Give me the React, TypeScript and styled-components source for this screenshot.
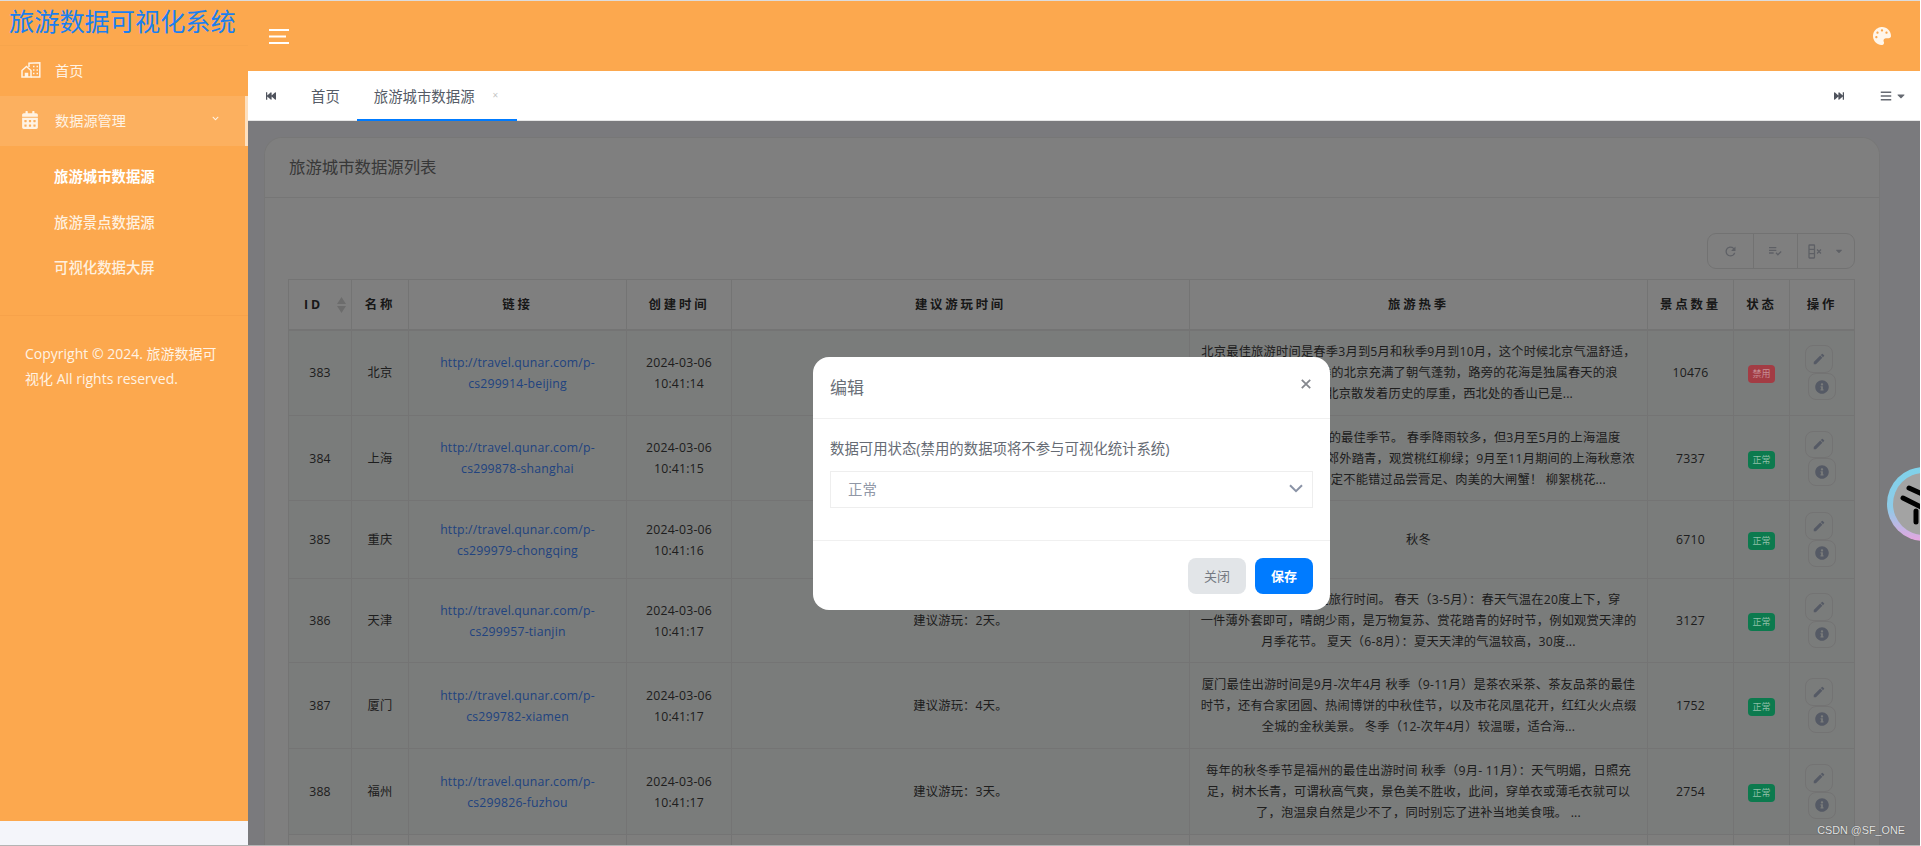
import React from 'react';
import styled, { createGlobalStyle } from 'styled-components';
import {
  FaBars,
  FaCalendarAlt,
  FaCaretDown,
  FaChevronDown,
  FaFastBackward,
  FaFastForward,
  FaInfoCircle,
  FaPalette,
} from 'react-icons/fa';
import { MdEdit, MdPlaylistAddCheck, MdRefresh } from 'react-icons/md';

interface ICityRow {
  id: number;
  name: string;
  linkHead: string;
  linkTail: string;
  date: string;
  time: string;
  days: string;
  season: string[];
  spots: number;
  enabled: boolean;
  height: number;
}

const COLUMNS = [63, 57, 218, 105, 458, 458, 86, 56, 65];

const ROWS: ICityRow[] = [
  {
    id: 383,
    name: '北京',
    linkHead: 'http://travel.qunar.com/p-',
    linkTail: 'cs299914-beijing',
    date: '2024-03-06',
    time: '10:41:14',
    days: '建议游玩：3天。',
    season: [
      '北京最佳旅游时间是春季3月到5月和秋季9月到10月，这个时候北京气温舒适，',
      '景色也很宜人。春季的北京充满了朝气蓬勃，路旁的花海是独属春天的浪',
      '漫；秋季的北京散发着历史的厚重，西北处的香山已是...',
    ],
    spots: 10476,
    enabled: false,
    height: 86,
  },
  {
    id: 384,
    name: '上海',
    linkHead: 'http://travel.qunar.com/p-',
    linkTail: 'cs299878-shanghai',
    date: '2024-03-06',
    time: '10:41:15',
    days: '建议游玩：3天。',
    season: [
      '上海春秋两季是旅游的最佳季节。 春季降雨较多，但3月至5月的上海温度',
      '适宜，适合踏春赏花、郊外踏青，观赏桃红柳绿；9月至11月期间的上海秋意浓',
      '郁，这时来上海一定不能错过品尝膏足、肉美的大闸蟹！ 柳絮桃花...',
    ],
    spots: 7337,
    enabled: true,
    height: 85,
  },
  {
    id: 385,
    name: '重庆',
    linkHead: 'http://travel.qunar.com/p-',
    linkTail: 'cs299979-chongqing',
    date: '2024-03-06',
    time: '10:41:16',
    days: '建议游玩：3天。',
    season: ['秋冬'],
    spots: 6710,
    enabled: true,
    height: 78,
  },
  {
    id: 386,
    name: '天津',
    linkHead: 'http://travel.qunar.com/p-',
    linkTail: 'cs299957-tianjin',
    date: '2024-03-06',
    time: '10:41:17',
    days: '建议游玩：2天。',
    season: [
      '天津春秋两季是最佳旅行时间。 春天（3-5月）：春天气温在20度上下，穿',
      '一件薄外套即可，晴朗少雨，是万物复苏、赏花踏青的好时节，例如观赏天津的',
      '月季花节。 夏天（6-8月）：夏天天津的气温较高，30度...',
    ],
    spots: 3127,
    enabled: true,
    height: 84,
  },
  {
    id: 387,
    name: '厦门',
    linkHead: 'http://travel.qunar.com/p-',
    linkTail: 'cs299782-xiamen',
    date: '2024-03-06',
    time: '10:41:17',
    days: '建议游玩：4天。',
    season: [
      '厦门最佳出游时间是9月-次年4月 秋季（9-11月）是茶农采茶、茶友品茶的最佳',
      '时节，还有合家团圆、热闹博饼的中秋佳节，以及市花凤凰花开，红红火火点缀',
      '全城的金秋美景。 冬季（12-次年4月）较温暖，适合海...',
    ],
    spots: 1752,
    enabled: true,
    height: 86,
  },
  {
    id: 388,
    name: '福州',
    linkHead: 'http://travel.qunar.com/p-',
    linkTail: 'cs299826-fuzhou',
    date: '2024-03-06',
    time: '10:41:17',
    days: '建议游玩：3天。',
    season: [
      '每年的秋冬季节是福州的最佳出游时间 秋季（9月- 11月）：天气明媚，日照充',
      '足，树木长青，可谓秋高气爽，景色美不胜收，此间，穿单衣或薄毛衣就可以',
      '了，泡温泉自然是少不了，同时别忘了进补当地美食哦。 ...',
    ],
    spots: 2754,
    enabled: true,
    height: 86,
  },
];

const GlobalStyle = createGlobalStyle`
  html, body {
    margin: 0;
    padding: 0;
    height: 100%;
    overflow: hidden;
    background: #fff;
  }

  * {
    box-sizing: border-box;
  }

  body {
    font-family: "Open Sans", "Noto Sans CJK SC", sans-serif;
  }
`;

const Page = styled.div`
  position: relative;
  width: 1920px;
  height: 846px;
  display: flex;
  flex-direction: column;
  overflow: hidden;
`;

const EdgeLine = styled.div<{ $color: string }>`
  flex: 0 0 1px;
  background: ${(p) => p.$color};
`;

const Shell = styled.div`
  flex: 1;
  display: flex;
  min-height: 0;
`;

const SideColumn = styled.div`
  flex: 0 0 248px;
  display: flex;
  flex-direction: column;
  background: #f4f5fa;
  padding-bottom: 24px;
`;

const Sidebar = styled.aside`
  flex: 1;
  display: flex;
  flex-direction: column;
  background: #fca84e;
  color: #fff;
`;

const Logo = styled.div`
  height: 45px;
  padding: 4px 0 0 9px;
  font-size: 25.2px;
  line-height: 33px;
  color: #1a7ff0;
  white-space: nowrap;
  border-bottom: 1px solid #f7a54c;
`;

const MenuItem = styled.div<{ $active?: boolean }>`
  position: relative;
  height: 50px;
  display: flex;
  align-items: center;
  padding: 0 0 2px 21px;
  font-size: 14.2px;
  color: #fff3e4;
  background: ${(p) => (p.$active ? '#fcb05f' : 'transparent')};
  border-right: ${(p) => (p.$active ? '3px solid #fde0c0' : '0')};
`;

const MenuIcon = styled.span`
  width: 34px;
  display: flex;
  align-items: center;
`;

const MenuArrow = styled.span`
  position: absolute;
  left: 212px;
  top: 19px;
  font-size: 7px;
  color: #fff3e4;
`;

const SubMenu = styled.div`
  display: flex;
  flex-direction: column;
  padding: 7px 0 25px;
  border-bottom: 1px solid #f7a24a;
`;

const SubItem = styled.div<{ $active?: boolean }>`
  height: 45.5px;
  padding-left: 54px;
  display: flex;
  align-items: center;
  font-size: 14.4px;
  font-weight: ${(p) => (p.$active ? 700 : 500)};
  color: ${(p) => (p.$active ? '#fff' : '#fff0df')};
`;

const Copyright = styled.div`
  padding: 25px 24px 0 25px;
  font-size: 14px;
  line-height: 25px;
  color: #fff3e4;
`;

const Main = styled.div`
  flex: 1;
  min-width: 0;
  display: flex;
  flex-direction: column;
`;

const TopBar = styled.header`
  flex: 0 0 70px;
  display: flex;
  align-items: center;
  justify-content: space-between;
  padding: 0 29px 0 21px;
  background: #fca84e;
  color: #fff;
`;

const TabBar = styled.nav`
  flex: 0 0 50px;
  display: flex;
  align-items: stretch;
  background: #fff;
  border-bottom: 1px solid #e6e6e6;
  font-size: 14.4px;
  color: #555b66;
`;

const TabArrow = styled.div`
  width: 46px;
  display: flex;
  align-items: center;
  justify-content: center;
  font-size: 10px;
  color: #50545e;
`;

const Tab = styled.div<{ $active?: boolean }>`
  display: flex;
  align-items: center;
  padding: 0 17px;
  margin-bottom: -1px;
  border-bottom: 2px solid ${(p) => (p.$active ? '#007bff' : 'transparent')};
`;

const TabClose = styled.span`
  margin-left: 18px;
  padding-right: 2px;
  font-size: 10px;
  color: #c4c4c4;
`;

const TabSpacer = styled.div`
  flex: 1;
`;

const TabMenu = styled.div`
  width: 58px;
  display: flex;
  align-items: center;
  gap: 3px;
  padding-left: 18px;
  font-size: 12px;
  color: #666a72;
`;

const Content = styled.main`
  position: relative;
  flex: 1;
  min-height: 0;
  overflow: hidden;
  background: #f4f5fa;
  padding: 16px 40px 0 16px;
`;

const Card = styled.section`
  background: #fff;
  border: 1px solid #efefef;
  border-bottom: 0;
  border-radius: 18px 18px 0 0;
`;

const CardTitle = styled.h2`
  margin: 0;
  height: 60px;
  padding: 0 0 4px 24px;
  display: flex;
  align-items: center;
  font-size: 16.4px;
  font-weight: 400;
  color: #707070;
  border-bottom: 1px solid #ececec;
`;

const CardBody = styled.div`
  padding: 35px 24px 0 23px;
`;

const Toolbar = styled.div`
  display: flex;
  justify-content: flex-end;
  margin-bottom: 10px;
`;

const ToolGroup = styled.div`
  display: flex;
  height: 36px;
  border: 1px solid #e4e4e4;
  border-radius: 9px;
`;

const ToolButton = styled.div<{ $wide?: boolean }>`
  width: ${(p) => (p.$wide ? 57 : 44.5)}px;
  display: flex;
  align-items: center;
  justify-content: center;
  gap: 12px;
  color: #bcc0cb;
  & + & {
    border-left: 1px solid #e4e4e4;
  }
`;

const Table = styled.table`
  width: 1567px;
  table-layout: fixed;
  border-collapse: collapse;
  font-size: 12.25px;
  letter-spacing: 0.2px;
  line-height: 21px;
  color: #3c3c3c;
`;

const Col = styled.col<{ $width: number }>`
  width: ${(p) => p.$width}px;
`;

const HeadCell = styled.th<{ $left?: boolean }>`
  position: relative;
  height: 50px;
  padding: 0;
  font-size: 12.4px;
  font-weight: 700;
  letter-spacing: 2.8px;
  color: #303030;
  text-align: ${(p) => (p.$left ? 'left' : 'center')};
  padding-left: ${(p) => (p.$left ? 15 : 0)}px;
  border: 1px solid #e8e8e8;
  border-bottom: 2px solid #e8e8e8;
`;

const SortArrows = styled.svg`
  position: absolute;
  right: 5px;
  top: 17px;
`;

const Row = styled.tr<{ $height: number; $last?: boolean }>`
  height: ${(p) => p.$height}px;
  background: ${(p) => (p.$last ? '#fcfcfb' : '#f5f8f6')};
`;

const Cell = styled.td<{ $tight?: boolean }>`
  padding: 0 ${(p) => (p.$tight ? 0 : 12)}px;
  text-align: center;
  vertical-align: middle;
  border: 1px solid #e8e8e8;
`;

const OpsCell = styled(Cell)`
  padding: 0 12px;
  font-size: 0;
  line-height: 0;
`;

const TextLine = styled.div`
  white-space: nowrap;
`;

const CityLink = styled.a`
  color: #4287ff;
  text-decoration: none;
`;

const Badge = styled.span<{ $ok: boolean }>`
  position: relative;
  z-index: 2;
  display: inline-block;
  width: 27px;
  height: 18px;
  border-radius: 4px;
  font-size: 9px;
  line-height: 18px;
  letter-spacing: 0;
  text-align: center;
  background: ${(p) => (p.$ok ? '#0c7a4e' : '#a33c44')};
  color: ${(p) => (p.$ok ? '#8fbfa8' : '#c78f94')};
`;

const IconButton = styled.span<{ $gap?: boolean }>`
  display: inline-flex;
  align-items: center;
  justify-content: center;
  width: 27.5px;
  height: 27.5px;
  margin-right: ${(p) => (p.$gap ? 6 : 0)}px;
  border: 1px solid #e6e6e6;
  border-radius: 8px;
  font-size: 14px;
  color: #abb4ca;
`;

const Backdrop = styled.div`
  position: absolute;
  inset: 0;
  z-index: 1;
  background: rgba(0, 0, 0, 0.5);
`;

const FloatBall = styled.div`
  position: absolute;
  z-index: 3;
  top: 346px;
  left: 1639px;
  width: 74px;
  height: 74px;
  padding: 6px;
  border-radius: 50%;
  background: linear-gradient(180deg, #7fd2ea 0%, #8ecbe8 55%, #e6a6e0 100%);
`;

const FloatFace = styled.div`
  width: 100%;
  height: 100%;
  border-radius: 50%;
  background: #a3a3a3;
`;

const Modal = styled.div`
  position: absolute;
  z-index: 5;
  left: 813px;
  top: 357px;
  width: 517px;
  height: 253px;
  display: flex;
  flex-direction: column;
  background: #fff;
  border-radius: 16px;
`;

const ModalHead = styled.div`
  flex: 0 0 62px;
  display: flex;
  align-items: center;
  justify-content: space-between;
  padding: 0 19px 2px 17px;
  font-size: 17px;
  color: #6a6f78;
  border-bottom: 1px solid #f0f0f0;
`;

const ModalClose = styled.svg`
  margin-top: -6px;
`;

const ModalBody = styled.div`
  flex: 1;
  padding: 19px 17px 0;
`;

const FieldLabel = styled.div`
  font-size: 14.4px;
  line-height: 22px;
  color: #666b74;
  margin-bottom: 11px;
`;

const SelectBox = styled.div`
  height: 37px;
  display: flex;
  align-items: center;
  justify-content: space-between;
  padding: 0 9px 2px 17px;
  border: 1px solid #eeeeee;
  font-size: 14.4px;
  color: #9097a6;
`;

const ModalFoot = styled.div`
  flex: 0 0 70px;
  display: flex;
  align-items: center;
  justify-content: flex-end;
  gap: 9px;
  padding: 0 17px 0 0;
  border-top: 1px solid #f0f0f0;
`;

const FootButton = styled.div<{ $primary?: boolean }>`
  width: 58px;
  height: 36px;
  display: flex;
  align-items: center;
  justify-content: center;
  border-radius: 8px;
  font-size: 13px;
  font-weight: ${(p) => (p.$primary ? 700 : 400)};
  background: ${(p) => (p.$primary ? '#007bff' : '#e2e5e8')};
  color: ${(p) => (p.$primary ? '#fff' : '#757a82')};
`;

const Watermark = styled.div`
  position: absolute;
  z-index: 6;
  right: 15px;
  bottom: 9px;
  font-family: "Liberation Sans", sans-serif;
  font-size: 10.8px;
  line-height: 14px;
  color: #e4e4e4;
  text-shadow: 0 0 1px #333;
`;

const HomeIcon = () => (
  <svg width="20" height="16" viewBox="0 0 20 16" fill="none" stroke="#fff3e4" strokeWidth="1.5">
    <path d="M1 15V8.5L5.5 4.5 10 8.5V15Z" />
    <path d="M4.5 15v-3.5h2V15" fill="#fff3e4" />
    <path d="M8 5V1.2L18.8.8V15H10" />
    <path d="M12 4.5h1.5M15.5 4.5H17M12 8h1.5M15.5 8H17M12 11.5h1.5M15.5 11.5H17" />
  </svg>
);

const MenuLines = () => (
  <svg width="20" height="15" viewBox="0 0 20 15" fill="#fff">
    <rect x="0" y="0" width="20" height="2" />
    <rect x="0" y="6.5" width="17" height="2" />
    <rect x="0" y="13" width="20" height="2" />
  </svg>
);

const ColumnsIcon = () => (
  <svg width="14" height="15" viewBox="0 0 14 15" fill="none" stroke="currentColor" strokeWidth="1.3">
    <rect x="1" y="1" width="5.5" height="13" rx="0.5" />
    <path d="M1 5.3h5.5M1 9.7h5.5" />
    <path d="M9 5.5l4 4M13 5.5l-4 4" />
  </svg>
);

const BallMark = () => (
  <svg width="62" height="62" viewBox="0 0 62 62" fill="none" stroke="#000" strokeWidth="5" strokeLinecap="round">
    <path d="M16 15l13 6" />
    <path d="M10 25l24 12" />
    <path d="M23 38v11" />
  </svg>
);

const App: React.FC = () => (
  <Page>
    <GlobalStyle />
    <EdgeLine $color="#dcdcdc" />

    <Shell>
      <SideColumn>
        <Sidebar>
          <Logo>旅游数据可视化系统</Logo>
          <MenuItem>
            <MenuIcon><HomeIcon /></MenuIcon>
            首页
          </MenuItem>
          <MenuItem $active>
            <MenuIcon><FaCalendarAlt size={18} /></MenuIcon>
            数据源管理
            <MenuArrow><FaChevronDown /></MenuArrow>
          </MenuItem>
          <SubMenu>
            <SubItem $active>旅游城市数据源</SubItem>
            <SubItem>旅游景点数据源</SubItem>
            <SubItem>可视化数据大屏</SubItem>
          </SubMenu>
          <Copyright>Copyright © 2024. 旅游数据可视化 All rights reserved.</Copyright>
        </Sidebar>
      </SideColumn>

      <Main>
        <TopBar>
          <MenuLines />
          <FaPalette size={18} color="#fff6ea" />
        </TopBar>

        <TabBar>
          <TabArrow><FaFastBackward /></TabArrow>
          <Tab>首页</Tab>
          <Tab $active>
            旅游城市数据源
            <TabClose>×</TabClose>
          </Tab>
          <TabSpacer />
          <TabArrow><FaFastForward /></TabArrow>
          <TabMenu>
            <FaBars />
            <FaCaretDown />
          </TabMenu>
        </TabBar>

        <Content>
          <Card>
            <CardTitle>旅游城市数据源列表</CardTitle>
            <CardBody>
              <Toolbar>
                <ToolGroup>
                  <ToolButton><MdRefresh size={15} /></ToolButton>
                  <ToolButton><MdPlaylistAddCheck size={16} /></ToolButton>
                  <ToolButton $wide>
                    <ColumnsIcon />
                    <FaCaretDown size={10} />
                  </ToolButton>
                </ToolGroup>
              </Toolbar>

              <Table>
                <colgroup>
                  {COLUMNS.map((width, index) => (
                    <Col key={index} $width={width} />
                  ))}
                </colgroup>
                <thead>
                  <tr>
                    <HeadCell $left>
                      ID
                      <SortArrows width="9" height="16" viewBox="0 0 9 16" fill="#d9d9d9">
                        <path d="M4.5 0L9 7H0Z" />
                        <path d="M4.5 16L0 9h9Z" />
                      </SortArrows>
                    </HeadCell>
                    <HeadCell>名称</HeadCell>
                    <HeadCell>链接</HeadCell>
                    <HeadCell>创建时间</HeadCell>
                    <HeadCell>建议游玩时间</HeadCell>
                    <HeadCell>旅游热季</HeadCell>
                    <HeadCell>景点数量</HeadCell>
                    <HeadCell>状态</HeadCell>
                    <HeadCell>操作</HeadCell>
                  </tr>
                </thead>
                <tbody>
                  {ROWS.map((row) => (
                    <Row key={row.id} $height={row.height}>
                      <Cell>{row.id}</Cell>
                      <Cell $tight>{row.name}</Cell>
                      <Cell $tight>
                        <CityLink href="#">
                          {row.linkHead}
                          <br />
                          {row.linkTail}
                        </CityLink>
                      </Cell>
                      <Cell $tight>
                        {row.date}
                        <br />
                        {row.time}
                      </Cell>
                      <Cell>{row.days}</Cell>
                      <Cell $tight>
                        {row.season.map((line) => (
                          <TextLine key={line}>{line}</TextLine>
                        ))}
                      </Cell>
                      <Cell $tight>{row.spots}</Cell>
                      <Cell $tight>
                        <Badge $ok={row.enabled}>{row.enabled ? '正常' : '禁用'}</Badge>
                      </Cell>
                      <OpsCell>
                        <IconButton $gap><MdEdit /></IconButton>
                        <IconButton><FaInfoCircle /></IconButton>
                      </OpsCell>
                    </Row>
                  ))}
                  <Row $height={40} $last>
                    {COLUMNS.map((_, index) => (
                      <Cell key={index} />
                    ))}
                  </Row>
                </tbody>
              </Table>
            </CardBody>
          </Card>

          <Backdrop />
          <FloatBall>
            <FloatFace>
              <BallMark />
            </FloatFace>
          </FloatBall>
        </Content>
      </Main>
    </Shell>

    <EdgeLine $color="#b4b4b4" />

    <Modal>
      <ModalHead>
        编辑
        <ModalClose width="10" height="10" viewBox="0 0 10 10" stroke="#85888e" strokeWidth="1.8">
          <path d="M.8.8l8.4 8.4M9.2.8L.8 9.2" />
        </ModalClose>
      </ModalHead>
      <ModalBody>
        <FieldLabel>数据可用状态(禁用的数据项将不参与可视化统计系统)</FieldLabel>
        <SelectBox>
          正常
          <svg width="14" height="9" viewBox="0 0 14 9" fill="none" stroke="#8a93a6" strokeWidth="2">
            <path d="M1 1.2l6 6 6-6" />
          </svg>
        </SelectBox>
      </ModalBody>
      <ModalFoot>
        <FootButton>关闭</FootButton>
        <FootButton $primary>保存</FootButton>
      </ModalFoot>
    </Modal>

    <Watermark>CSDN @SF_ONE</Watermark>
  </Page>
);

export default App;
